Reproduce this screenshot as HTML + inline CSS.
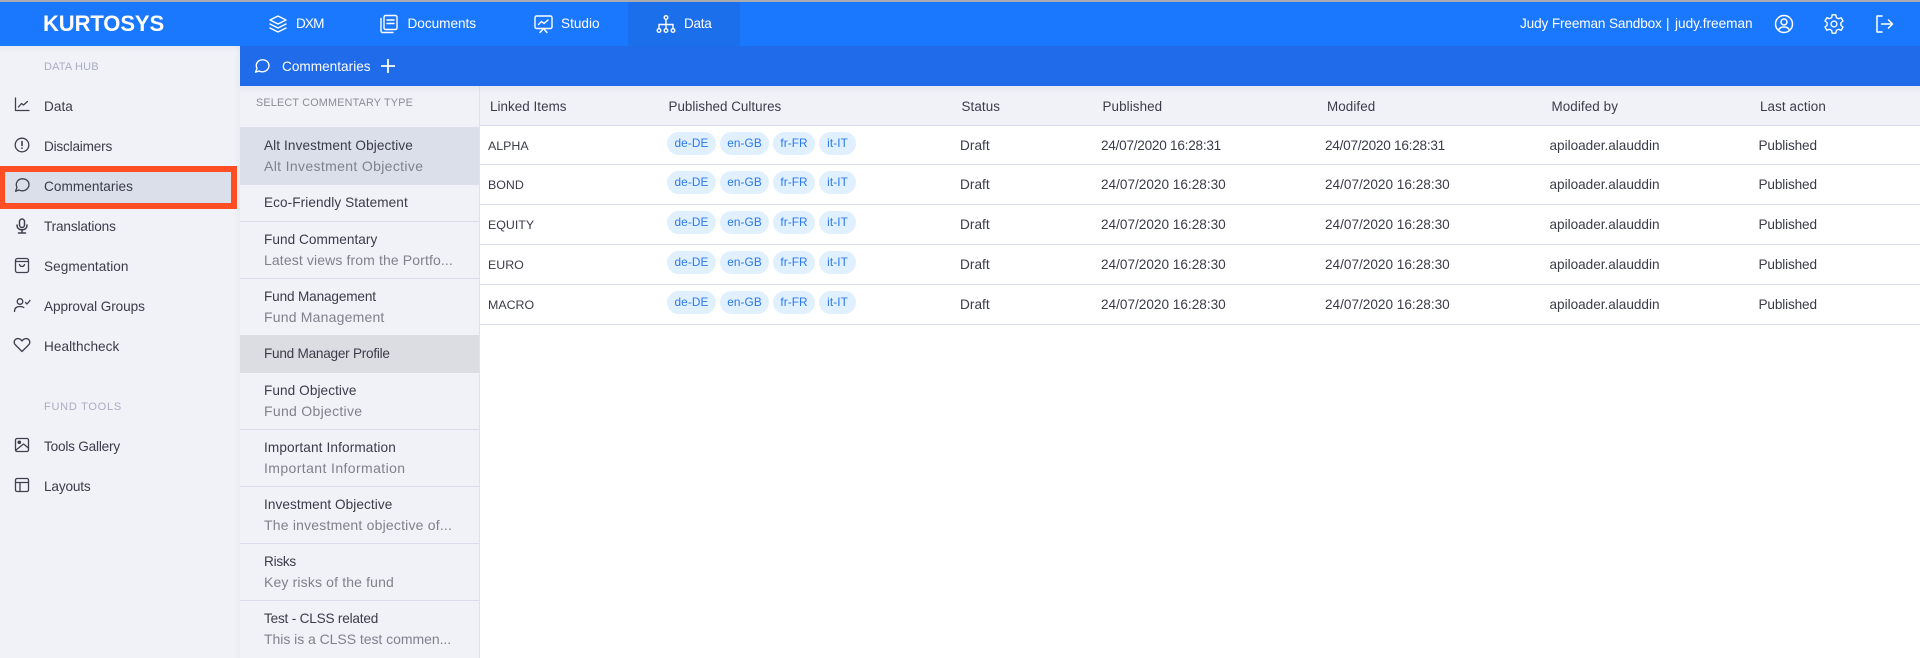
<!DOCTYPE html>
<html><head><meta charset="utf-8"><title>Commentaries</title>
<style>
html,body{margin:0;padding:0;background:#fff}
#p{position:relative;width:1920px;height:658px;overflow:hidden;background:#fff;font-family:"Liberation Sans",sans-serif;color:#3a3c49;font-size:13.6px}
.b{position:absolute}
.t{position:absolute;line-height:20px;height:20px;white-space:nowrap;letter-spacing:.05px}
.w{color:#fff}
.s{color:#7f828c;font-size:14px;letter-spacing:.3px}
.h{font-size:13.4px;letter-spacing:.1px}
.u{font-size:12.4px;letter-spacing:0}
.d{letter-spacing:0}
.g{letter-spacing:-.02px}
.pb{letter-spacing:-.15px}
.c{position:absolute;height:23px;border-radius:11.5px;background:#e0f0ff;color:#2a78f0;font-size:11.8px;line-height:22px;text-align:center;letter-spacing:.1px}
.l{position:absolute;height:1px;background:#d9dcea}
svg{position:absolute;fill:none;stroke-linecap:round;stroke-linejoin:round}
.iw{stroke:#fff;stroke-width:1.4}
.id{stroke:#3d404d;stroke-width:1.3}
</style></head><body><div id="p">
<div class="b" style="left:0;top:0;width:1920px;height:2px;background:#a9abb0"></div>
<div class="b" style="left:0;top:2px;width:1920px;height:44px;background:#1a78ff"></div>
<div class="b" style="left:628px;top:2px;width:112px;height:44px;background:#1c6fea"></div>
<div class="b" style="left:240px;top:46px;width:1680px;height:40px;background:#1f6bea"></div>
<div class="b" style="left:0;top:46px;width:240px;height:612px;background:linear-gradient(90deg,#f0f2f8 0,#f0f2f8 234px,#e9ebf2 240px)"></div>
<div class="b" style="left:240px;top:86px;width:239px;height:572px;background:#f0f2f8"></div>
<div class="b" style="left:479px;top:86px;width:1px;height:572px;background:#dfe2ec"></div>
<div class="b" style="left:480px;top:86px;width:1440px;height:39px;background:#f0f2f8"></div>
<div class="b" style="left:240px;top:86px;width:1680px;height:8px;background:linear-gradient(180deg,rgba(60,70,100,.06),rgba(60,70,100,0))"></div>
<div class="b" style="left:0;top:46px;width:240px;height:6px;background:linear-gradient(180deg,rgba(60,70,100,.05),rgba(60,70,100,0))"></div>

<span class="t w" style="left:43px;top:13px;font-size:22px;font-weight:bold;line-height:22px;height:22px;letter-spacing:-.1px">KURTOSYS</span>

<svg class="iw" style="left:268px;top:14px" width="20" height="20" viewBox="0 0 20 20"><path d="M10 2 18 6 10 10 2 6Z"/><path d="M2 10 10 14 18 10"/><path d="M2 14 10 18 18 14"/></svg>
<span class="t w" style="left:296px;top:14px;letter-spacing:-.9px">DXM</span>
<svg class="iw" style="left:379px;top:14px" width="20" height="20" viewBox="0 0 20 20"><rect x="5" y="1.5" width="13" height="14" rx="1.5"/><path d="M8 6h7M8 9.5h7M2 4.5v12.5a1.5 1.5 0 0 0 1.5 1.5H14"/></svg>
<span class="t w" style="left:407.5px;top:14px;letter-spacing:-.02px">Documents</span>
<svg class="iw" style="left:534px;top:14px" width="19" height="20" viewBox="0 0 19 20"><rect x="1" y="2" width="17" height="12.5" rx="1.5"/><path d="M4.5 10.5 7.5 7.5 10 9.5 14 6M6 18.5 9.5 14.5 13 18.5"/></svg>
<span class="t w" style="left:561px;top:14px;letter-spacing:0">Studio</span>
<svg class="iw" style="left:656px;top:14px" width="20" height="20" viewBox="0 0 20 20"><circle cx="10" cy="3.5" r="1.8"/><circle cx="3" cy="16.5" r="1.8"/><circle cx="10" cy="16.5" r="1.8"/><circle cx="17" cy="16.5" r="1.8"/><path d="M10 5.500v9M3 14.500V10.500H17V14.500"/></svg>
<span class="t w" style="left:684px;top:14px;letter-spacing:-.3px">Data</span>

<span class="t w" style="left:1520px;top:14px;letter-spacing:-.13px">Judy Freeman Sandbox</span>
<span class="t w" style="left:1666px;top:14px">|</span>
<span class="t w" style="left:1675px;top:14px;letter-spacing:0">judy.freeman</span>
<svg class="iw" style="left:1774px;top:14px;stroke-width:1.5" width="20" height="20" viewBox="0 0 20 20"><circle cx="10" cy="10" r="8.500"/><circle cx="10" cy="8" r="3"/><path d="M4.500 16c1-2.200 3-3 5.500-3s4.500.800 5.500 3"/></svg>
<svg class="iw" style="left:1823px;top:13px;stroke-width:1.5" width="22" height="22" viewBox="0 0 24 24"><circle cx="12" cy="12" r="3.200"/><path d="M10 2h4l.6 3 2.400 1.300 2.800-1.100 2 3.500-2.300 2 0 2.700 2.300 2-2 3.500-2.800-1.100L14.600 19l-.6 3h-4l-.6-3-2.400-1.300-2.800 1.100-2-3.500 2.300-2 0-2.700-2.300-2 2-3.500 2.800 1.100L9.400 5Z"/></svg>
<svg class="iw" style="left:1874px;top:14px;stroke-width:1.5" width="20" height="20" viewBox="0 0 20 20"><path d="M8 2H3v16h5M7.500 10H18.500M14.500 6l4 4-4 4"/></svg>

<svg class="iw" style="left:254px;top:58px" width="16" height="16" viewBox="0 0 16 16"><path d="M3 10.500C1 6.500 3.500 1.800 8.500 1.800 12.500 1.800 15 4.500 15 7.500 15 11 12 13.800 8 13.800 6.800 13.800 5.800 13.500 5 13L1.500 14.200Z"/></svg>
<span class="t w" style="left:282px;top:56.500px;letter-spacing:.02px">Commentaries</span>
<svg style="left:381px;top:59px;stroke:#fff;stroke-width:1.800" width="14" height="14" viewBox="0 0 14 14"><path d="M7 0V14M0 7H14"/></svg>

<span class="t" style="left:44px;top:56.500px;font-size:11px;color:#a9aec0;letter-spacing:.17px">DATA HUB</span>
<span class="t" style="left:44px;top:396.500px;font-size:11px;color:#a9aec0;letter-spacing:.74px">FUND TOOLS</span>

<div class="b" style="left:0;top:166px;width:237px;height:43px;background:#ff4e23"></div>
<div class="b" style="left:5px;top:172px;width:226px;height:31px;background:#dbdfea"></div>

<svg class="id" style="left:14px;top:97px" width="16" height="15" viewBox="0 0 16 15"><path d="M1.500 1V13.500H15M4.500 10 7.500 6.500 9.500 8 13.500 4.500"/></svg>
<span class="t" style="left:44px;top:96.500px">Data</span>
<svg class="id" style="left:14px;top:137px" width="16" height="16" viewBox="0 0 16 16"><circle cx="8" cy="8" r="6.800"/><path d="M8 4.500V8.500M8 11V11.300" stroke-width="1.600"/></svg>
<span class="t" style="left:44px;top:136.500px;letter-spacing:-.2px">Disclaimers</span>
<svg class="id" style="left:14px;top:177px" width="16" height="16" viewBox="0 0 16 16"><path d="M3 10.500C1 6.500 3.500 1.800 8.500 1.800 12.500 1.800 15 4.500 15 7.500 15 11 12 13.800 8 13.800 6.800 13.800 5.800 13.500 5 13L1.500 14.200Z"/></svg>
<span class="t" style="left:44px;top:176.500px">Commentaries</span>
<svg class="id" style="left:14px;top:218px;stroke-width:1.500" width="16" height="16" viewBox="0 0 16 16"><rect x="5.500" y="1" width="5" height="8.500" rx="2.500"/><path d="M3 7c0 3 2 4.800 5 4.800S13 10 13 7M8 12V14.500M4.500 15H11.500"/></svg>
<span class="t" style="left:44px;top:216.500px;letter-spacing:-.15px">Translations</span>
<svg class="id" style="left:14px;top:257px" width="16" height="17" viewBox="0 0 16 17"><rect x="1.500" y="1.500" width="13" height="14" rx="2"/><path d="M2 4.500H14M5.500 7.500c.5 1.500 1.400 2 2.500 2s2-.500 2.500-2"/></svg>
<span class="t" style="left:44px;top:256.500px">Segmentation</span>
<svg class="id" style="left:13px;top:297px" width="18" height="16" viewBox="0 0 18 16"><circle cx="7" cy="4.500" r="2.800"/><path d="M1.500 14.500c0-3.500 2.300-5 5.500-5 1.500 0 2.800.3 3.800 1M12.500 5.500 14 7 17 3.500"/></svg>
<span class="t" style="left:44px;top:296.500px;letter-spacing:-.08px">Approval Groups</span>
<svg class="id" style="left:13px;top:337px" width="18" height="16" viewBox="0 0 18 16"><path d="M9 14.500 2.500 8C.5 6 1 3.300 2.800 2.200 4.800 1 7.500 1.500 9 4 10.500 1.500 13.200 1 15.200 2.200 17 3.300 17.500 6 15.500 8Z"/></svg>
<span class="t" style="left:44px;top:336.500px">Healthcheck</span>
<svg class="id" style="left:14px;top:437px" width="16" height="16" viewBox="0 0 16 16"><rect x="1.500" y="1.500" width="13" height="13" rx="1.500"/><circle cx="5.300" cy="5.300" r="1.200" fill="#3d404d"/><path d="M2 13 9.500 7 14.500 11"/></svg>
<span class="t" style="left:44px;top:436.500px;letter-spacing:-.2px">Tools Gallery</span>
<svg class="id" style="left:14px;top:477px" width="16" height="16" viewBox="0 0 16 16"><rect x="1.500" y="1.500" width="13" height="13" rx="1.500"/><path d="M1.500 5.500H14.500M6 5.500V14.500"/></svg>
<span class="t" style="left:44px;top:476.500px;letter-spacing:-.15px">Layouts</span>

<span class="t" style="left:256px;top:93px;font-size:10.800px;color:#8a8d96;letter-spacing:.2px">SELECT COMMENTARY TYPE</span>

<div class="b" style="left:240px;top:127px;width:239px;height:58px;background:#dbdfea"></div>
<div class="b" style="left:240px;top:335px;width:239px;height:38px;background:#dcdde3"></div>
<div class="l" style="left:240px;top:221px;width:239px"></div>
<div class="l" style="left:240px;top:278px;width:239px"></div>
<div class="l" style="left:240px;top:429px;width:239px"></div>
<div class="l" style="left:240px;top:486px;width:239px"></div>
<div class="l" style="left:240px;top:543px;width:239px"></div>
<div class="l" style="left:240px;top:600px;width:239px"></div>

<span class="t" style="left:264px;top:135.500px;letter-spacing:.1px">Alt Investment Objective</span><span class="t s" style="left:264px;top:156px;letter-spacing:.35px">Alt Investment Objective</span>
<span class="t" style="left:264px;top:192.500px;letter-spacing:.08px">Eco-Friendly Statement</span>
<span class="t" style="left:264px;top:230px">Fund Commentary</span><span class="t s" style="left:264px;top:250px;letter-spacing:.12px">Latest views from the Portfo...</span>
<span class="t" style="left:264px;top:287px;letter-spacing:-.15px">Fund Management</span><span class="t s" style="left:264px;top:307px;letter-spacing:.2px">Fund Management</span>
<span class="t" style="left:264px;top:344px;letter-spacing:-.25px">Fund Manager Profile</span>
<span class="t" style="left:264px;top:381px;letter-spacing:.08px">Fund Objective</span><span class="t s" style="left:264px;top:401px">Fund Objective</span>
<span class="t" style="left:264px;top:438px;letter-spacing:.13px">Important Information</span><span class="t s" style="left:264px;top:458px;letter-spacing:.4px">Important Information</span>
<span class="t" style="left:264px;top:495px;letter-spacing:.07px">Investment Objective</span><span class="t s" style="left:264px;top:515px;letter-spacing:.2px">The investment objective of...</span>
<span class="t" style="left:264px;top:552px;letter-spacing:-.25px">Risks</span><span class="t s" style="left:264px;top:572px;letter-spacing:.15px">Key risks of the fund</span>
<span class="t" style="left:264px;top:609px;letter-spacing:-.2px">Test - CLSS related</span><span class="t s" style="left:264px;top:629px;letter-spacing:-.04px">This is a CLSS test commen...</span>

<div class="l" style="left:480px;top:125px;width:1440px"></div>
<div class="l" style="left:480px;top:164px;width:1440px"></div>
<div class="l" style="left:480px;top:204px;width:1440px"></div>
<div class="l" style="left:480px;top:244px;width:1440px"></div>
<div class="l" style="left:480px;top:284px;width:1440px"></div>
<div class="l" style="left:480px;top:324px;width:1440px"></div>

<span class="t h" style="left:490px;top:96.500px;letter-spacing:.05px">Linked Items</span>
<span class="t h" style="left:668.500px;top:96.500px;letter-spacing:.02px">Published Cultures</span>
<span class="t h" style="left:961.500px;top:96.500px">Status</span>
<span class="t h" style="left:1102.500px;top:96.500px">Published</span>
<span class="t h" style="left:1327px;top:96.500px">Modifed</span>
<span class="t h" style="left:1551.500px;top:96.500px">Modifed by</span>
<span class="t h" style="left:1760px;top:96.500px">Last action</span>

<span class="t u" style="left:488px;top:136px">ALPHA</span><div class="c" style="left:667px;top:132px;width:49px">de-DE</div><div class="c" style="left:720px;top:132px;width:49px">en-GB</div><div class="c" style="left:773px;top:132px;width:42px">fr-FR</div><div class="c" style="left:819px;top:132px;width:37px">it-IT</div><span class="t" style="left:960px;top:136px">Draft</span><span class="t" style="left:1101px;top:136px;letter-spacing:-.25px">24/07/2020 16:28:31</span><span class="t" style="left:1325px;top:136px;letter-spacing:-.25px">24/07/2020 16:28:31</span><span class="t g" style="left:1549.500px;top:136px">apiloader.alauddin</span><span class="t pb" style="left:1758.500px;top:136px">Published</span>

<span class="t u" style="left:488px;top:174.500px">BOND</span><div class="c" style="left:667px;top:171px;width:49px">de-DE</div><div class="c" style="left:720px;top:171px;width:49px">en-GB</div><div class="c" style="left:773px;top:171px;width:42px">fr-FR</div><div class="c" style="left:819px;top:171px;width:37px">it-IT</div><span class="t" style="left:960px;top:174.500px">Draft</span><span class="t d" style="left:1101px;top:174.500px">24/07/2020 16:28:30</span><span class="t d" style="left:1325px;top:174.500px">24/07/2020 16:28:30</span><span class="t g" style="left:1549.500px;top:174.500px">apiloader.alauddin</span><span class="t pb" style="left:1758.500px;top:174.500px">Published</span>

<span class="t u" style="left:488px;top:214.500px">EQUITY</span><div class="c" style="left:667px;top:211px;width:49px">de-DE</div><div class="c" style="left:720px;top:211px;width:49px">en-GB</div><div class="c" style="left:773px;top:211px;width:42px">fr-FR</div><div class="c" style="left:819px;top:211px;width:37px">it-IT</div><span class="t" style="left:960px;top:214.500px">Draft</span><span class="t d" style="left:1101px;top:214.500px">24/07/2020 16:28:30</span><span class="t d" style="left:1325px;top:214.500px">24/07/2020 16:28:30</span><span class="t g" style="left:1549.500px;top:214.500px">apiloader.alauddin</span><span class="t pb" style="left:1758.500px;top:214.500px">Published</span>

<span class="t u" style="left:488px;top:254.500px">EURO</span><div class="c" style="left:667px;top:251px;width:49px">de-DE</div><div class="c" style="left:720px;top:251px;width:49px">en-GB</div><div class="c" style="left:773px;top:251px;width:42px">fr-FR</div><div class="c" style="left:819px;top:251px;width:37px">it-IT</div><span class="t" style="left:960px;top:254.500px">Draft</span><span class="t d" style="left:1101px;top:254.500px">24/07/2020 16:28:30</span><span class="t d" style="left:1325px;top:254.500px">24/07/2020 16:28:30</span><span class="t g" style="left:1549.500px;top:254.500px">apiloader.alauddin</span><span class="t pb" style="left:1758.500px;top:254.500px">Published</span>

<span class="t u" style="left:488px;top:294.500px">MACRO</span><div class="c" style="left:667px;top:291px;width:49px">de-DE</div><div class="c" style="left:720px;top:291px;width:49px">en-GB</div><div class="c" style="left:773px;top:291px;width:42px">fr-FR</div><div class="c" style="left:819px;top:291px;width:37px">it-IT</div><span class="t" style="left:960px;top:294.500px">Draft</span><span class="t d" style="left:1101px;top:294.500px">24/07/2020 16:28:30</span><span class="t d" style="left:1325px;top:294.500px">24/07/2020 16:28:30</span><span class="t g" style="left:1549.500px;top:294.500px">apiloader.alauddin</span><span class="t pb" style="left:1758.500px;top:294.500px">Published</span>
</div></body></html>
